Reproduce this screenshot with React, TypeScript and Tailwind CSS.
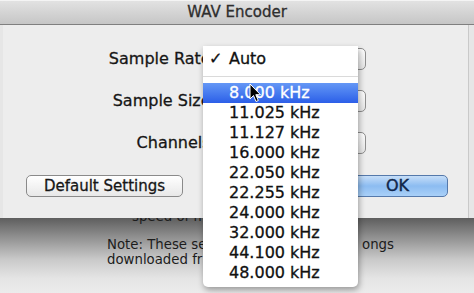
const rates = [
  '8.000 kHz',
  '11.025 kHz',
  '11.127 kHz',
  '16.000 kHz',
  '22.050 kHz',
  '22.255 kHz',
  '24.000 kHz',
  '32.000 kHz',
  '44.100 kHz',
  '48.000 kHz',
];

const labels = ['Sample Rate:', 'Sample Size:', 'Channels:'];

const PopupButton = () => (
  <div className="h-[22px] w-[144px] rounded-[5px] border border-[#8e8e8e] bg-gradient-to-b from-[#ffffff] to-[#e6e6e6]" />
);

export default function App() {
  return (
    <div className="relative w-[474px] h-[293px] overflow-hidden bg-[#f1f1f1] font-['DejaVu_Sans',sans-serif]">
      {/* Title bar */}
      <div className="h-[25px] flex items-center justify-center border-b border-[#7f7f7f] border-t border-t-[#f4f4f4] bg-gradient-to-b from-[#e2e2e2] to-[#c6c6c6] text-[15px] text-[#2e2e2e] [-webkit-text-stroke:0.3px_#2e2e2e]">
        WAV Encoder
      </div>

      {/* Dialog body */}
      <div className="flex bg-[#e6e6e6]">
        <div className="ml-[3px] w-[466px] h-[193px] bg-[#ededed] border-r border-[#c9c9c9] flex flex-col pt-[23px]">
          {labels.map((label, i) => (
            <div key={label} className={`flex items-center h-[22px] ${i > 0 ? 'mt-[20px]' : ''}`}>
              <div className="w-[213px] text-right text-[16px] text-[#161616] leading-none [-webkit-text-stroke:0.3px_#161616]">
                {label}
              </div>
              <div className="ml-[6px]">
                <PopupButton />
              </div>
            </div>
          ))}
          <div className="mt-[21px] flex items-center justify-between pl-[23px] pr-[20px]">
            <div className="h-[22px] w-[157px] rounded-[5px] border border-[#8a8a8a] bg-gradient-to-b from-[#ffffff] to-[#e8e8e8] flex items-center justify-center text-[15px] text-[#161616] [-webkit-text-stroke:0.3px_#161616]">
              Default Settings
            </div>
            <div className="h-[22px] w-[101px] rounded-[5px] border border-[#5579ab] bg-gradient-to-b from-[#c6def8] via-[#8cbcf1] to-[#a9d0f8] flex items-center justify-center text-[16px] text-[#10264a] [-webkit-text-stroke:0.4px_#10264a]">
              OK
            </div>
          </div>
        </div>
      </div>

      {/* Window behind, under the sheet's shadow; the middle of each line is hidden by the menu */}
      <div className="h-[75px] overflow-hidden bg-[linear-gradient(to_bottom,#5e5e5e_0%,#8f8f8f_25%,#c9c9c9_55%,#e4e4e4_80%,#ececec_100%)] text-[13.3px] leading-[15px] text-[#1c1c1c]">
        <div className="h-[6px] overflow-hidden">
          <div className="-mt-[9px] pl-[132px]">speed of m</div>
        </div>
        <div className="mt-[13px] flex whitespace-nowrap">
          <span className="pl-[107px] w-[210px]">Note: These se</span>
          <span className="ml-[152px]">ongs</span>
        </div>
        <div className="pl-[107px]">downloaded fr</div>
      </div>

      {/* Open pop-up menu */}
      <div className="absolute left-[203px] top-[46px] w-[155px] bg-white rounded-b-[5px] shadow-[1px_3px_6px_rgba(0,0,0,0.35)] pt-[3px] pb-[4px] text-[16px] text-[#111] [-webkit-text-stroke:0.3px_#111]">
        <div className="relative h-[20px] flex items-center pl-[26px]">
          <span className="absolute left-[6px] top-0 leading-[20px]">✓</span>
          Auto
        </div>
        <div className="h-[14px] flex items-center">
          <div className="h-px w-full bg-[#dadada]" />
        </div>
        {rates.map((r, i) => (
          <div
            key={r}
            className={`h-[20px] flex items-center pl-[26px] ${
              i === 0
                ? 'bg-gradient-to-b from-[#6597f5] to-[#2c5ee8] text-white [-webkit-text-stroke:0.3px_#fff]'
                : ''
            }`}
          >
            {r}
          </div>
        ))}
      </div>

      {/* Mouse pointer */}
      <svg className="absolute left-[249px] top-[83px]" width="13" height="20" viewBox="0 0 13 20">
        <path d="M1 1 L1 16 L4.5 12.5 L7 18.5 L9.3 17.5 L6.8 11.7 L11.5 11.7 Z" fill="#000" stroke="#fff" strokeWidth="1" strokeLinejoin="round" />
      </svg>
    </div>
  );
}
